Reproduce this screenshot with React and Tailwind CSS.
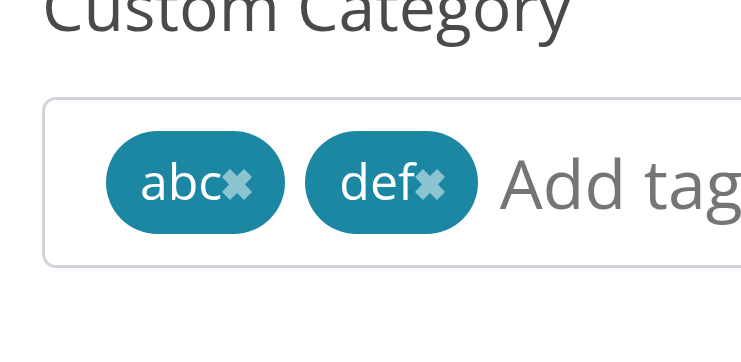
import React, { useState } from 'react';

const XMark = () => (
    <svg width="30" height="31" viewBox="0 0 30 31" aria-hidden={true} className="shrink-0 block">
        <path d="M0 8 L8 0 L15 7 L22 0 L30 8 L23 15.5 L30 23 L22 31 L15 24 L8 31 L0 23 L7 15.5 Z" fill="#8cc3d1" />
    </svg>
);

const Tag = ({ label, onRemove }) => (
    <div className="flex items-center h-[103px] pl-[34px] pr-[33px] rounded-full bg-[#1b87a2] text-white text-[50px] leading-none shrink-0">
        <span className="pb-[4px]">{label}</span>
        <button type="button" onClick={onRemove} className="flex items-center w-[30px] h-[31px] mt-[4px]">
            <XMark />
        </button>
    </div>
);

export default function App() {
    const [tags, setTags] = useState(['abc', 'def']);

    return (
        <div className="w-[741px] h-[362px] overflow-hidden bg-white" style={{ fontFamily: '"Open Sans", "Noto Sans", sans-serif' }}>
            <div className="pl-[42px]">
                <h2 className="text-[66px] leading-none text-[#4a4a4a] -mt-[28px] whitespace-nowrap">Custom Category</h2>
                <div className="mt-[59px] w-[900px] h-[171px] border-[3px] border-[#d1d5db] rounded-[14px] flex items-center gap-[20px] pl-[61px]">
                    {tags.map((t) => (
                        <Tag key={t} label={t} onRemove={() => setTags(tags.filter((x) => x !== t))} />
                    ))}
                    <input
                        className="ml-[2px] text-[68px] leading-none text-[#757575] placeholder:text-[#757575] outline-none bg-transparent w-[300px]"
                        placeholder="Add tag"
                    />
                </div>
            </div>
        </div>
    );
}
